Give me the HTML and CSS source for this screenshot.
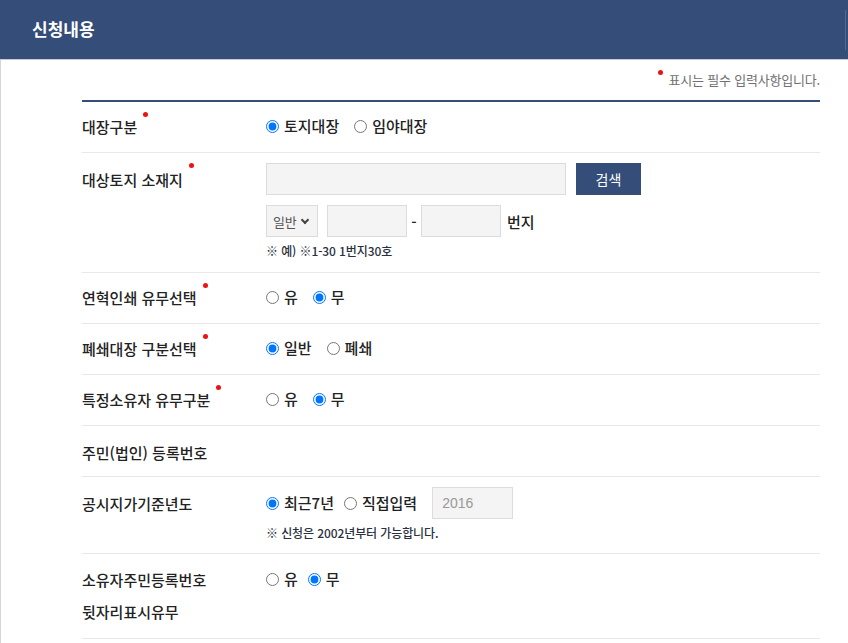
FILE: index.html
```html
<!DOCTYPE html>
<html lang="ko">
<head>
<meta charset="utf-8">
<title>신청내용</title>
<link rel="stylesheet" href="styles.css">
</head>
<body>
<div class="page">
  <header class="head">
    <h2 class="head-title">신청내용</h2>
  </header>
  <div class="content">
    <p class="req-note"><span class="dot"></span>표시는 필수 입력사항입니다.</p>
    <div class="form">
      <div class="row">
        <div class="th"><span class="lbl must">대장구분</span></div>
        <div class="td">
          <div class="radios">
            <label class="opt"><input type="radio" name="r1" checked>토지대장</label>
            <label class="opt"><input type="radio" name="r1">임야대장</label>
          </div>
        </div>
      </div>
      <div class="row">
        <div class="th th-addr"><span class="lbl must">대상토지 소재지</span></div>
        <div class="td">
          <div class="line">
            <input class="inp inp-addr" type="text">
            <button class="btn" type="button">검색</button>
          </div>
          <div class="line line-2">
            <span class="sel-wrap"><select class="sel"><option>일반</option><option>산</option></select></span>
            <input class="inp inp-num" type="text">
            <span class="dash">-</span>
            <input class="inp inp-num" type="text">
            <span class="unit">번지</span>
          </div>
          <p class="hint">※ 예) ※1-30 1번지30호</p>
        </div>
      </div>
      <div class="row">
        <div class="th"><span class="lbl must">연혁인쇄 유무선택</span></div>
        <div class="td">
          <div class="radios">
            <label class="opt"><input type="radio" name="r3">유</label>
            <label class="opt"><input type="radio" name="r3" checked>무</label>
          </div>
        </div>
      </div>
      <div class="row">
        <div class="th"><span class="lbl must">폐쇄대장 구분선택</span></div>
        <div class="td">
          <div class="radios">
            <label class="opt"><input type="radio" name="r4" checked>일반</label>
            <label class="opt"><input type="radio" name="r4">폐쇄</label>
          </div>
        </div>
      </div>
      <div class="row">
        <div class="th"><span class="lbl must">특정소유자 유무구분</span></div>
        <div class="td">
          <div class="radios">
            <label class="opt"><input type="radio" name="r5">유</label>
            <label class="opt"><input type="radio" name="r5" checked>무</label>
          </div>
        </div>
      </div>
      <div class="row">
        <div class="th th-low"><span class="lbl">주민(법인) 등록번호</span></div>
        <div class="td"></div>
      </div>
      <div class="row">
        <div class="th th-low"><span class="lbl">공시지가기준년도</span></div>
        <div class="td">
          <div class="line">
            <div class="radios radios-tight">
              <label class="opt"><input type="radio" name="r7" checked>최근7년</label>
              <label class="opt"><input type="radio" name="r7">직접입력</label>
            </div>
            <input class="inp inp-year" type="text" value="2016" readonly>
          </div>
          <p class="hint hint-7">※ 신청은 2002년부터 가능합니다.</p>
        </div>
      </div>
      <div class="row">
        <div class="th th-multi"><span class="lbl">소유자주민등록번호<br>뒷자리표시유무</span></div>
        <div class="td">
          <div class="radios radios-tight">
            <label class="opt"><input type="radio" name="r8">유</label>
            <label class="opt"><input type="radio" name="r8" checked>무</label>
          </div>
        </div>
      </div>
    </div>
  </div>
</div>
</body>
</html>
```
FILE: styles.css
```css
* { box-sizing: border-box; }
html, body { margin: 0; padding: 0; background: #fff; }
body {
  font-family: "Noto Sans CJK KR", "Noto Sans", sans-serif;
  color: #222;
  overflow: hidden;
}
.page { width: 848px; height: 643px; }

.head {
  position: relative;
  height: 60px;
  background: #344d79;
  border-bottom: 1px solid #c6ccd7;
  display: flex;
  align-items: center;
  padding-left: 32px;
}
.head::after {
  content: "";
  position: absolute;
  right: 2px;
  top: 10px;
  width: 1px;
  height: 40px;
  background: #55698f;
}
.head-title {
  margin: 0;
  color: #fff;
  font-size: 17px;
  font-weight: 700;
  letter-spacing: 0;
  line-height: 24px;
  padding-bottom: 1px;
}

.content {
  border-left: 1px solid #d6d6d6;
  padding: 0 28px 0 81px;
  height: 583px;
}
.req-note {
  margin: 0;
  height: 40px;
  padding-top: 10px;
  line-height: 20px;
  text-align: right;
  font-size: 13px;
  color: #707070;
  letter-spacing: -0.2px;
}
.req-note .dot {
  display: inline-block;
  width: 5px;
  height: 5px;
  border-radius: 50%;
  background: #ee1111;
  vertical-align: top;
  margin-top: 0;
  margin-right: 6px;
}

.form { border-top: 2px solid #344d79; }
.row {
  display: grid;
  grid-template-columns: 184px 1fr;
  padding: 10px 0 10px;
  border-bottom: 1px solid #e8e8e8;
}
.th {
  font-size: 15px;
  font-weight: 500;
  line-height: 29px;
  letter-spacing: 0;
  color: #222;
}
.th-addr { line-height: 33px; }
.th-low { line-height: 30px; padding-top: 2px; margin-bottom: -2px; }
.th-multi { line-height: 32px; }
.lbl { position: relative; display: inline-block; }
.must::after {
  content: "";
  position: absolute;
  top: 0;
  right: -11px;
  width: 5px;
  height: 5px;
  border-radius: 50%;
  background: #ee1111;
}

.td { font-size: 15px; font-weight: 500; letter-spacing: 0; color: #222; }
.radios {
  display: flex;
  align-items: flex-start;
  height: 30px;
  gap: 15px;
}
.radios-tight { gap: 10px; align-items: center; }
.opt {
  display: inline-flex;
  align-items: center;
  line-height: 28px;
}
.radios-tight .opt { line-height: 30px; }
.opt input {
  width: 13px;
  height: 13px;
  margin: 0 5px 0 0;
}

.line { display: flex; align-items: center; }
.line-2 { margin-top: 10px; }
.inp {
  height: 32px;
  border: 1px solid #dcdcdc;
  background: #f4f4f4;
  padding: 0 9px;
  font-family: "Liberation Sans", sans-serif;
  font-size: 14px;
  font-weight: 400;
  color: #999;
  outline: none;
}
.inp-addr { width: 300px; }
.inp-num { width: 80px; }
.inp-year { width: 81px; margin-left: 15px; letter-spacing: 0; }
.btn {
  margin-left: 10px;
  width: 65px;
  height: 32px;
  border: 0;
  background: #344d79;
  color: #fff;
  font-family: "Noto Sans CJK KR", sans-serif;
  font-size: 14px;
  letter-spacing: 0;
  cursor: pointer;
}
.sel-wrap {
  position: relative;
  display: inline-block;
  width: 52px;
  height: 32px;
  margin-right: 9px;
}
.sel-wrap::after {
  content: "";
  position: absolute;
  right: 10px;
  top: 12px;
  width: 4px;
  height: 4px;
  border-right: 2px solid #444;
  border-bottom: 2px solid #444;
  transform: rotate(45deg);
  pointer-events: none;
}
.sel {
  appearance: none;
  -webkit-appearance: none;
  width: 52px;
  height: 32px;
  border: 1px solid #dcdcdc;
  border-radius: 0;
  background: #f4f4f4;
  font-family: "Noto Sans CJK KR", sans-serif;
  font-size: 13px;
  font-weight: 400;
  color: #555;
  padding: 0 0 0 6px;
  letter-spacing: -0.3px;
}
.dash { width: 14px; text-align: center; font-size: 15px; }
.unit { margin-left: 6px; }
.hint {
  margin: 5px 0 0;
  line-height: 18px;
  font-size: 12px;
  font-weight: 500;
  letter-spacing: -0.1px;
  color: #2a3040;
  padding-bottom: 2px;
}
.hint-7 { margin-top: 5px; padding-bottom: 1px; }
```
